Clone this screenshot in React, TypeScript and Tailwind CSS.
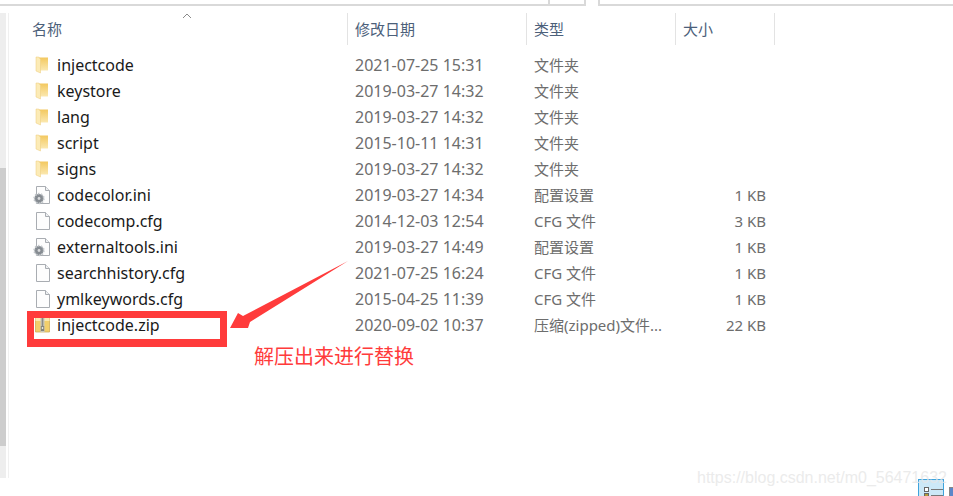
const font = "font-['Noto_Sans','Noto_Sans_CJK_SC',sans-serif]";

type Kind = "folder" | "gear" | "file" | "zip";

const rows: { name: string; date: string; type: string; size: string; kind: Kind }[] = [
  { name: "injectcode", date: "2021-07-25 15:31", type: "文件夹", size: "", kind: "folder" },
  { name: "keystore", date: "2019-03-27 14:32", type: "文件夹", size: "", kind: "folder" },
  { name: "lang", date: "2019-03-27 14:32", type: "文件夹", size: "", kind: "folder" },
  { name: "script", date: "2015-10-11 14:31", type: "文件夹", size: "", kind: "folder" },
  { name: "signs", date: "2019-03-27 14:32", type: "文件夹", size: "", kind: "folder" },
  { name: "codecolor.ini", date: "2019-03-27 14:34", type: "配置设置", size: "1 KB", kind: "gear" },
  { name: "codecomp.cfg", date: "2014-12-03 12:54", type: "CFG 文件", size: "3 KB", kind: "file" },
  { name: "externaltools.ini", date: "2019-03-27 14:49", type: "配置设置", size: "1 KB", kind: "gear" },
  { name: "searchhistory.cfg", date: "2021-07-25 16:24", type: "CFG 文件", size: "1 KB", kind: "file" },
  { name: "ymlkeywords.cfg", date: "2015-04-25 11:39", type: "CFG 文件", size: "1 KB", kind: "file" },
  { name: "injectcode.zip", date: "2020-09-02 10:37", type: "压缩(zipped)文件...", size: "22 KB", kind: "zip" },
];

function FileIcon({ kind }: { kind: Kind }) {
  if (kind === "folder") {
    return (
      <svg width="16" height="18" viewBox="-3 0 16 18" className="shrink-0">
        <defs>
          <linearGradient id="fld" x1="0" y1="0" x2="0" y2="1">
            <stop offset="0" stopColor="#f3c85f" />
            <stop offset="1" stopColor="#fbe8b0" />
          </linearGradient>
        </defs>
        <path d="M3 1.5h9v13H4z" fill="url(#fld)" />
        <path d="M0 1h2.8l1.7 2.5v13.5l-4.5-2z" fill="#fcebb6" stroke="#eccb7a" strokeWidth="0.5" />
      </svg>
    );
  }
  if (kind === "zip") {
    return (
      <svg width="17" height="18" viewBox="-2 0 17 18" className="shrink-0">
        <path d="M0.5 2h14v14h-14z" fill="#f2cf6b" stroke="#cfae58" strokeWidth="0.8" />
        <path d="M0.5 2h14v3h-14z" fill="#fbe9ae" />
        <path d="M5.5 0.5h4v15.5h-4z" fill="#c9c9c0" />
        <path d="M7.5 0.5v10" stroke="#4e4e48" strokeWidth="1.6" strokeDasharray="1 1" />
        <rect x="5.8" y="10" width="3.4" height="5" fill="#85857c" />
        <rect x="6.8" y="11" width="1.4" height="2" fill="#e4e4dc" />
      </svg>
    );
  }
  return (
    <svg width="18" height="20" viewBox="0 0 18 20" className="shrink-0">
      <path d="M3.5 1.5h9l4 4v13h-13z" fill="#fdfdfd" stroke="#a9adb2" strokeWidth="1" />
      <path d="M12.5 1.5v4h4" fill="#eef0f2" stroke="#a9adb2" strokeWidth="1" />
      {kind === "gear" && (
        <g>
          <circle cx="6" cy="13.5" r="4.6" fill="#858b91" />
          <circle cx="6" cy="13.5" r="4.8" fill="none" stroke="#c4c8cc" strokeWidth="1.8" strokeDasharray="1.5 1.5" />
          <circle cx="6" cy="13.5" r="1.4" fill="#d8dadc" />
        </g>
      )}
    </svg>
  );
}

const headers = [
  { label: "修改日期", w: "w-[179px]" },
  { label: "类型", w: "w-[149px]" },
  { label: "大小", w: "w-[99px]" },
];

export default function App() {
  return (
    <div className={`${font} relative h-[496px] w-[953px] overflow-hidden bg-white`}>
      {/* top strip */}
      <div className="flex h-[6px] items-stretch">
        <div className="w-[548px] border-b-2 border-[#d9d9d9]" />
        <div className="w-[38px] border-x-2 border-b-2 border-[#d9d9d9]" />
        <div className="w-[12px]" />
        <div className="flex-1 border-b-2 border-l-2 border-[#d9d9d9]" />
      </div>

      <div className="mt-[7px] flex h-[465px] items-stretch">
        {/* scrollbar */}
        <div className="flex w-[6px] flex-col bg-[#eeeeee]">
          <div className="h-[155px]" />
          <div className="h-[278px] bg-[#cdcdcd]" />
        </div>
        <div className="ml-[2px] w-px bg-[#f0f0f0]" />

        {/* list */}
        <div className="flex-1">
          <div className="flex h-[32px] text-[15px] leading-[32px] text-[#4c607a]">
            <div className="relative w-[338px] pl-[23px]">
              名称
              <svg width="10" height="6" viewBox="0 0 10 6" className="absolute left-[173px] top-0">
                <path d="M1 5l4-4 4 4" fill="none" stroke="#8a8a8a" strokeWidth="1" />
              </svg>
            </div>
            {headers.map((h) => (
              <div key={h.label} className={`${h.w} border-l border-[#e3e3e3] pl-[7px]`}>
                {h.label}
              </div>
            ))}
            <div className="w-px bg-[#e3e3e3]" />
          </div>

          <div className="mt-[7px]">
            {rows.map((r) => (
              <div key={r.name} className="flex h-[26px] items-center text-[16px]">
                <div className="flex w-[338px] items-center pl-[24px] text-[#1a1a1a]">
                  <span className="flex w-[24px] items-center">
                    <FileIcon kind={r.kind} />
                  </span>
                  {r.name}
                </div>
                <div className="w-[179px] pl-[8px] text-[#6d6d6d]">{r.date}</div>
                <div className="w-[149px] pl-[8px] text-[15px] leading-[26px] text-[#6d6d6d]">{r.type}</div>
                <div className="w-[91px] text-right text-[15px] leading-[26px] text-[#6d6d6d]">{r.size}</div>
              </div>
            ))}
          </div>
        </div>
      </div>

      {/* annotations drawn over the screenshot */}
      <div className="absolute left-[27px] top-[311px] h-[36px] w-[200px] border-x-[7px] border-b-[8px] border-t-[7px] border-[#ff3b3b]" />
      <svg width="130" height="80" viewBox="0 0 130 80" className="absolute left-[225px] top-[255px]">
        <path d="M5 73L13 58 18 61 123 6 25 67 23 73z" fill="#ff3b3b" />
      </svg>
      <div className="absolute left-[254px] top-[343px] text-[20px] leading-[28px] text-[#ff3b3b]">解压出来进行替换</div>

      {/* view buttons */}
      <div className="absolute left-[918px] top-[479px] h-[20px] w-[26px] border border-[#3fa3dc] bg-[#cce8f7]">
        <div className="ml-[5px] mt-[7px] flex items-center gap-[2px]">
          <div className="h-[5px] w-[5px] border border-[#666] bg-white" />
          <div className="h-px w-[13px] bg-[#777]" />
        </div>
        <div className="ml-[5px] mt-[1px] flex items-center gap-[2px]">
          <div className="h-[5px] w-[5px] border border-[#666] bg-[#b59b3a]" />
          <div className="h-px w-[13px] bg-[#777]" />
        </div>
      </div>
      <div className="absolute left-[949px] top-[487px] h-[12px] w-[8px] border border-[#888] bg-[#5b86c9]" />

      {/* watermark */}
      <div className="absolute left-[697px] top-[466px] font-['Liberation_Sans',sans-serif] text-[16px] leading-[24px] text-[#e6e6e6]/80">
        https://blog.csdn.net/m0_56471632
      </div>
    </div>
  );
}
